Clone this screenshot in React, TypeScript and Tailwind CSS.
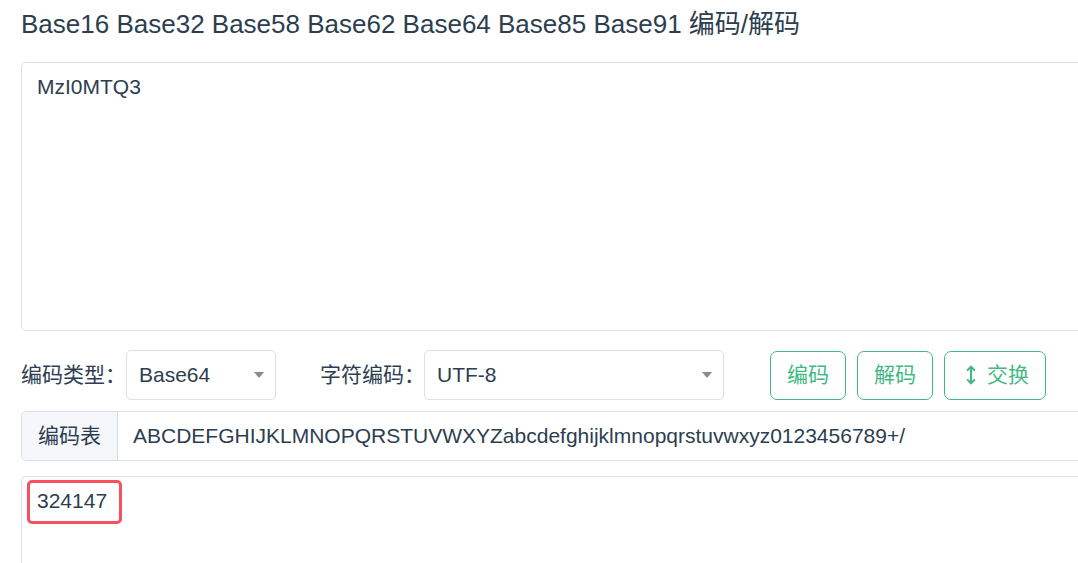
import React from "react";
import { MoveVertical } from "lucide-react";

const font = "font-['Liberation_Sans','Noto_Sans_CJK_SC',sans-serif]";

function Select({ value, width }: { value: string; width: string }) {
    return (
        <div
            className={`flex h-[50px] shrink-0 items-center justify-between rounded-[5px] border border-[#dcdfe6] bg-white pl-[12px] pr-[10px] ${width}`}
        >
            <span className="text-[21px] text-[#2c3e50]">{value}</span>
            <span className="mr-[1px] h-0 w-0 border-x-[5px] border-t-[6px] border-x-transparent border-t-[#8a8a8a]" />
        </div>
    );
}

function OutlineButton({ children }: { children: React.ReactNode }) {
    return (
        <button className="flex h-[49px] shrink-0 items-center gap-[6px] rounded-[7px] border border-[#42b983] bg-white px-[16px] text-[21px] text-[#42b983]">
            {children}
        </button>
    );
}

export default function App() {
    // states
    const [input] = React.useState("MzI0MTQ3");
    const [output] = React.useState("324147");

    return (
        <div className={`h-[563px] w-[1078px] overflow-hidden bg-white ${font}`}>
            <div className="w-[1160px] pl-[21px] pt-[6px]">
                <h1 className="text-[26px] leading-[37px] text-[#2c3e50]">
                    Base16 Base32 Base58 Base62 Base64 Base85 Base91 编码/解码
                </h1>

                {/* input */}
                <div className="mt-[19px] h-[269px] rounded-[5px] border border-[#dcdfe6] px-[15px] pt-[9px] text-[21px] leading-[30px] text-[#2c3e50]">
                    {input}
                </div>

                {/* options */}
                <div className="mt-[19px] flex items-center">
                    <span className="w-[105px] shrink-0 whitespace-nowrap text-[21px] text-[#2c3e50]">编码类型：</span>
                    <Select value="Base64" width="w-[150px]" />
                    <span className="ml-[44px] w-[104px] shrink-0 whitespace-nowrap text-[21px] text-[#2c3e50]">
                        字符编码：
                    </span>
                    <Select value="UTF-8" width="w-[300px]" />
                    <div className="ml-[46px] flex gap-[11px]">
                        <OutlineButton>编码</OutlineButton>
                        <OutlineButton>解码</OutlineButton>
                        <OutlineButton>
                            <MoveVertical size={20} strokeWidth={2.4} />
                            交换
                        </OutlineButton>
                    </div>
                </div>

                {/* alphabet */}
                <div className="mt-[11px] flex h-[50px] rounded-[5px] border border-[#dcdfe6]">
                    <div className="flex items-center rounded-l-[5px] border-r border-[#dcdfe6] bg-[#f5f7fa] px-[16px] text-[21px] text-[#2c3e50]">
                        编码表
                    </div>
                    <div className="flex items-center pl-[15px] text-[21px] text-[#2c3e50]">
                        ABCDEFGHIJKLMNOPQRSTUVWXYZabcdefghijklmnopqrstuvwxyz0123456789+/
                    </div>
                </div>

                {/* output */}
                <div className="relative mt-[15px] h-[200px] rounded-[5px] border border-[#dcdfe6] px-[15px] pt-[9px] text-[21px] leading-[30px] text-[#2c3e50]">
                    {output}
                    <span className="absolute left-[5px] top-[3px] h-[44px] w-[95px] rounded-[5px] border-[3px] border-[#f5515f]" />
                </div>
            </div>
        </div>
    );
}
